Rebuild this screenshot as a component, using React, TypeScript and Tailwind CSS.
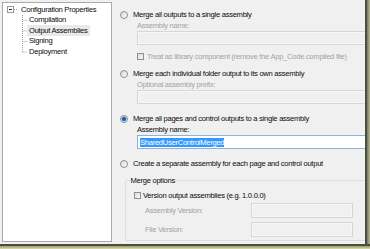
import React from "react";

const TEXT = "font-['Liberation_Sans',Arial,sans-serif] text-[7.6px] tracking-[-0.28px]";

function Radio({ checked = false }: { checked?: boolean }) {
  return (
    <span className="w-[8px] h-[8px] rounded-full border border-[#8e8f8f] bg-linear-to-br from-[#d9d9d9] to-[#fbfbfb] flex items-center justify-center shrink-0">
      {checked && <span className="w-[4px] h-[4px] rounded-full bg-[#1b5aa0] ring-1 ring-[#9cc3ea]" />}
    </span>
  );
}

function Check() {
  return <span className="w-[7px] h-[7px] border border-[#8f8f8f] bg-linear-to-br from-[#dcdcdc] to-[#f8f8f8] shrink-0" />;
}

function RadioRow({ label, checked, className }: { label: string; checked?: boolean; className: string }) {
  return (
    <div className={`h-[11px] flex items-center gap-[5px] text-[#0a0a0a] ${className}`}>
      <Radio checked={checked} />
      <span className="whitespace-nowrap">{label}</span>
    </div>
  );
}

const TREE_CHILDREN = ["Compilation", "Output Assemblies", "Signing", "Deployment"];

function Tree() {
  return (
    <div className="ml-[2px] mt-[2px] w-[110px] h-[240px] border border-[#a7abb0] bg-white shrink-0 text-[#0a0a0a]">
      {/* root node */}
      <div className="mt-[1px] h-[10.6px] flex items-center pl-[4px]">
        <svg width="12" height="7" viewBox="0 0 12 7" className="shrink-0">
          <rect x="0.5" y="0.5" width="6" height="6" fill="#fff" stroke="#9a9a9a" />
          <line x1="2" y1="3.5" x2="5" y2="3.5" stroke="#333" />
          <line x1="7" y1="3.5" x2="10" y2="3.5" stroke="#9a9a9a" strokeDasharray="1 1" />
        </svg>
        <span className="ml-[2px] whitespace-nowrap">Configuration Properties</span>
      </div>

      {/* children with connector lines */}
      <div className="flex">
        <svg width="24" height="43" viewBox="0 0 24 43" className="shrink-0">
          <line x1="19.5" y1="0" x2="19.5" y2="37.1" stroke="#9a9a9a" strokeDasharray="1 1" />
          {[5.3, 15.9, 26.5, 37.1].map((y) => (
            <line key={y} x1="19.5" y1={y} x2="24" y2={y} stroke="#9a9a9a" strokeDasharray="1 1" />
          ))}
        </svg>
        <div className="flex flex-col">
          {TREE_CHILDREN.map((name) => (
            <div
              key={name}
              className={`h-[10.6px] flex items-center px-[2px] whitespace-nowrap ${
                name === "Output Assemblies" ? "bg-[#e9e9e9]" : ""
              }`}
            >
              {name}
            </div>
          ))}
        </div>
      </div>
    </div>
  );
}

function DisabledBox({ className }: { className: string }) {
  return <div className={`border border-[#d6d6d6] bg-[#f0f0f0] shadow-[inset_0_0_0_1px_#f7f7f7] ${className}`} />;
}

export default function App() {
  return (
    <div className={`w-[370px] h-[249px] flex flex-col bg-[#f0f0f0] overflow-hidden ${TEXT}`}>
      <div className="flex h-[244px]">
        <div className="w-[365px] flex items-start overflow-hidden">
          <Tree />

          {/* options pane */}
          <div className="flex-1 min-w-0 flex flex-col pl-[8px]">
            <RadioRow className="mt-[9px]" label="Merge all outputs to a single assembly" />
            <div className="h-[11px] leading-[11px] pl-[17px] text-[#a3a3a3] whitespace-nowrap">Assembly name:</div>
            <DisabledBox className="ml-[17px] h-[14px] w-[260px] shrink-0" />
            <div className="mt-[6px] h-[11px] flex items-center gap-[3px] pl-[17px] text-[#a3a3a3] whitespace-nowrap">
              <Check />
              <span>Treat as library component (remove the App_Code.compiled file)</span>
            </div>

            <RadioRow className="mt-[6px]" label="Merge each individual folder output to its own assembly" />
            <div className="h-[11px] leading-[11px] pl-[17px] text-[#a3a3a3] whitespace-nowrap">Optional assembly prefix:</div>
            <DisabledBox className="ml-[17px] h-[14px] w-[260px] shrink-0" />

            <RadioRow className="mt-[9px]" checked label="Merge all pages and control outputs to a single assembly" />
            <div className="h-[11px] leading-[11px] pl-[17px] text-[#0a0a0a] whitespace-nowrap">Assembly name:</div>
            <div className="ml-[17px] h-[14px] w-[260px] shrink-0 border border-[#8fb2d9] bg-white flex items-center pl-[2px]">
              <span className="bg-[#3399ff] text-white leading-[9px] whitespace-nowrap">SharedUserControlMerged</span>
            </div>

            <RadioRow className="mt-[9px]" label="Create a separate assembly for each page and control output" />

            <fieldset className="mt-[6px] ml-[5px] w-[300px] h-[66px] border border-[#d5dfe5] rounded-[2px] shrink-0">
              <legend className="ml-[4px] px-[0.5px] h-[11px] leading-[11px] text-[#0a0a0a]">Merge options</legend>
              <div className="mt-[4px] h-[11px] flex items-center gap-[2px] pl-[8px] text-[#0a0a0a] whitespace-nowrap">
                <Check />
                <span>Version output assemblies (e.g. 1.0.0.0)</span>
              </div>
              <div className="mt-[2px] h-[15px] flex items-center pl-[19px] text-[#a3a3a3]">
                <span className="w-[106px] whitespace-nowrap">Assembly Version:</span>
                <DisabledBox className="h-[15px] w-[102px]" />
              </div>
              <div className="mt-[4px] h-[15px] flex items-center pl-[19px] text-[#a3a3a3]">
                <span className="w-[106px] whitespace-nowrap">File Version:</span>
                <DisabledBox className="h-[15px] w-[102px]" />
              </div>
            </fieldset>
          </div>
        </div>
        {/* right thumbnail shadow */}
        <div className="w-[5px] flex">
          <div className="w-[2px] bg-[#4e4e3e]" />
          <div className="flex-1 bg-linear-to-r from-[#7a7a60] to-[#b8b898]" />
        </div>
      </div>
      {/* bottom thumbnail shadow */}
      <div className="h-[5px] flex flex-col">
        <div className="h-[2px] bg-[#4e4e3e]" />
        <div className="flex-1 bg-linear-to-b from-[#9a9a70] to-[#dcdcaa]" />
      </div>
    </div>
  );
}
